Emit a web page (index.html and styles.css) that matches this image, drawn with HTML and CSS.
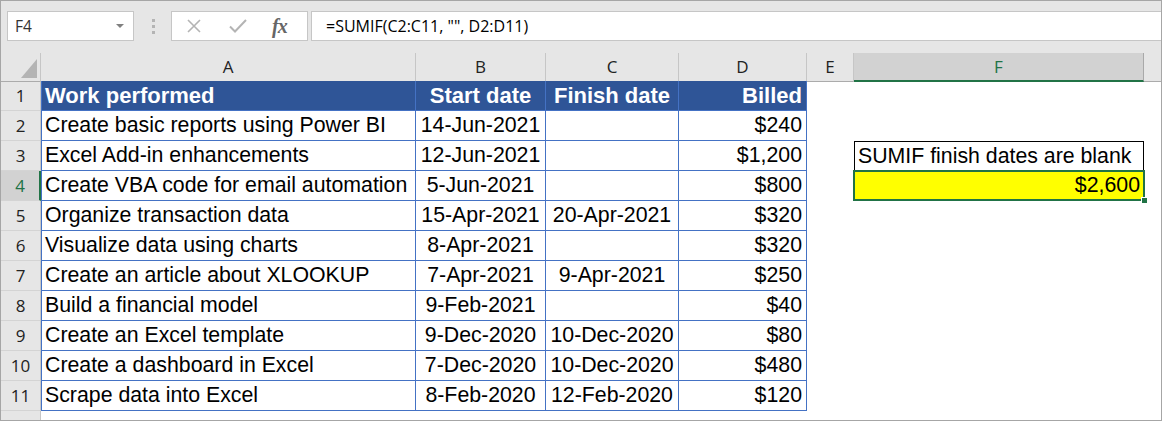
FILE: index.html
```html
<!DOCTYPE html>
<html>
<head>
  <meta charset="utf-8">
  <title>SUMIF blank dates</title>
  <link rel="stylesheet" href="styles.css">
</head>
<body>
  <div class="window">

    <div class="formula-bar">
      <div class="name-box">
        <span class="name-text">F4</span>
        <span class="caret"></span>
      </div>
      <div class="grip"></div>
      <div class="fx-buttons">
        <svg class="btn-icon" width="16" height="16" viewBox="0 0 16 16">
          <path d="M2 2 L14 14 M14 2 L2 14" stroke="#b4b4b4" stroke-width="1.6" fill="none"/>
        </svg>
        <svg class="btn-icon" width="18" height="16" viewBox="0 0 18 16">
          <path d="M1 8.5 L6 13.5 L17 2" stroke="#b4b4b4" stroke-width="2" fill="none"/>
        </svg>
        <span class="fx">fx</span>
      </div>
      <div class="formula-input">=SUMIF(C2:C11, "", D2:D11)</div>
    </div>

    <div class="sheet">
      <div class="row col-heads">
        <div class="corner"><span class="corner-tri"></span></div>
        <div class="col-head">A</div>
        <div class="col-head">B</div>
        <div class="col-head">C</div>
        <div class="col-head">D</div>
        <div class="col-head">E</div>
        <div class="col-head active">F</div>
        <div class="col-rest"></div>
      </div>

      <div class="row">
        <div class="row-head">1</div>
        <div class="cell th first">Work performed</div>
        <div class="cell th center">Start date</div>
        <div class="cell th center">Finish date</div>
        <div class="cell th right">Billed</div>
        <div></div><div></div><div></div>
      </div>

      <div class="row">
        <div class="row-head">2</div>
        <div class="cell first">Create basic reports using Power BI</div>
        <div class="cell center">14-Jun-2021</div>
        <div class="cell center"></div>
        <div class="cell right">$240</div>
        <div></div><div></div><div></div>
      </div>

      <div class="row">
        <div class="row-head">3</div>
        <div class="cell first">Excel Add-in enhancements</div>
        <div class="cell center">12-Jun-2021</div>
        <div class="cell center"></div>
        <div class="cell right">$1,200</div>
        <div></div>
        <div class="label-cell">SUMIF finish dates are blank</div>
        <div></div>
      </div>

      <div class="row">
        <div class="row-head active">4</div>
        <div class="cell first">Create VBA code for email automation</div>
        <div class="cell center">5-Jun-2021</div>
        <div class="cell center"></div>
        <div class="cell right">$800</div>
        <div></div>
        <div class="result-cell">$2,600</div>
        <div></div>
      </div>

      <div class="row">
        <div class="row-head">5</div>
        <div class="cell first">Organize transaction data</div>
        <div class="cell center">15-Apr-2021</div>
        <div class="cell center">20-Apr-2021</div>
        <div class="cell right">$320</div>
        <div></div><div></div><div></div>
      </div>

      <div class="row">
        <div class="row-head">6</div>
        <div class="cell first">Visualize data using charts</div>
        <div class="cell center">8-Apr-2021</div>
        <div class="cell center"></div>
        <div class="cell right">$320</div>
        <div></div><div></div><div></div>
      </div>

      <div class="row">
        <div class="row-head">7</div>
        <div class="cell first">Create an article about XLOOKUP</div>
        <div class="cell center">7-Apr-2021</div>
        <div class="cell center">9-Apr-2021</div>
        <div class="cell right">$250</div>
        <div></div><div></div><div></div>
      </div>

      <div class="row">
        <div class="row-head">8</div>
        <div class="cell first">Build a financial model</div>
        <div class="cell center">9-Feb-2021</div>
        <div class="cell center"></div>
        <div class="cell right">$40</div>
        <div></div><div></div><div></div>
      </div>

      <div class="row">
        <div class="row-head">9</div>
        <div class="cell first">Create an Excel template</div>
        <div class="cell center">9-Dec-2020</div>
        <div class="cell center">10-Dec-2020</div>
        <div class="cell right">$80</div>
        <div></div><div></div><div></div>
      </div>

      <div class="row">
        <div class="row-head">10</div>
        <div class="cell first">Create a dashboard in Excel</div>
        <div class="cell center">7-Dec-2020</div>
        <div class="cell center">10-Dec-2020</div>
        <div class="cell right">$480</div>
        <div></div><div></div><div></div>
      </div>

      <div class="row">
        <div class="row-head">11</div>
        <div class="cell first">Scrape data into Excel</div>
        <div class="cell center">8-Feb-2020</div>
        <div class="cell center">12-Feb-2020</div>
        <div class="cell right">$120</div>
        <div></div><div></div><div></div>
      </div>

      <div class="row tail">
        <div class="row-head"></div>
        <div></div><div></div><div></div><div></div><div></div><div></div><div></div>
      </div>
    </div>

  </div>
</body>
</html>
```

FILE: styles.css
```css
html, body { margin: 0; padding: 0; background: #fff; }

.window {
  width: 1162px;
  height: 421px;
  box-sizing: border-box;
  border: 1px solid #a6a6a6;
  background: #e6e6e6;
  display: flex;
  flex-direction: column;
  overflow: hidden;
}

/* formula bar */
.formula-bar {
  height: 52px;
  box-sizing: border-box;
  padding: 10px 0 0 6px;
  display: flex;
  align-items: flex-start;
  font-family: "Segoe UI", "Open Sans", sans-serif;
}

.name-box, .fx-buttons, .formula-input {
  height: 30px;
  box-sizing: border-box;
  background: #fff;
  border: 1px solid #c6c6c6;
}

.name-box {
  width: 127px;
  display: flex;
  align-items: center;
  justify-content: space-between;
  padding: 0 9px 0 7px;
}
.name-text { font-size: 15.5px; color: #333; }
.caret {
  width: 0;
  height: 0;
  border-left: 4px solid transparent;
  border-right: 4px solid transparent;
  border-top: 4px solid #808080;
}

.grip {
  margin: 8px 0 0 18px;
  width: 3px;
  height: 3px;
  background: #b4b4b4;
  box-shadow: 0 6px 0 #b4b4b4, 0 12px 0 #b4b4b4;
}

.fx-buttons {
  margin-left: 16px;
  width: 137px;
  display: flex;
  align-items: center;
  padding-left: 14px;
  gap: 27px;
}
.btn-icon { display: block; }
.fx {
  font-family: "Liberation Serif", serif;
  font-style: italic;
  font-weight: bold;
  font-size: 20px;
  color: #666;
  letter-spacing: -1px;
  margin-left: -2px;
}

.formula-input {
  margin-left: 3px;
  flex: 1;
  border-right: none;
  padding-left: 14px;
  font-size: 16px;
  line-height: 28px;
  color: #000;
}

/* sheet grid */
.sheet {
  flex: 1;
  display: flex;
  flex-direction: column;
  background: #fff;
}

.row {
  display: grid;
  grid-template-columns: 40px 375px 130px 133px 128px 47px 290px 1fr;
  height: 30px;
}
.row.col-heads { height: 28px; background: #e6e6e6; }
.row.tail { flex: 1; height: auto; }

.corner, .col-head, .col-rest {
  box-sizing: border-box;
  border-bottom: 1px solid #ababab;
  font-family: "Segoe UI", "Open Sans", sans-serif;
  font-size: 17px;
  color: #222;
  text-align: center;
  line-height: 27px;
}
.corner, .col-head { border-right: 1px solid #c6c6c6; }
.corner { position: relative; }
.corner-tri {
  position: absolute;
  right: 3px;
  bottom: 3px;
  width: 16px;
  height: 19px;
  background: #b4b4b4;
  clip-path: polygon(100% 0, 100% 100%, 0 100%);
}
.col-head.active {
  background: #d2d2d2;
  color: #217346;
  border-bottom: 2px solid #217346;
  border-right-color: #a9a9a9;
}

.row-head {
  box-sizing: border-box;
  background: #e6e6e6;
  border-right: 1px solid #c6c6c6;
  border-bottom: 1px solid #d4d4d4;
  font-family: "Segoe UI", "Open Sans", sans-serif;
  font-size: 17px;
  color: #222;
  text-align: center;
  line-height: 29px;
}
.row-head.active {
  background: #d2d2d2;
  color: #217346;
  border-right: 2px solid #217346;
}
.tail .row-head { border-bottom: none; }

.cell {
  box-sizing: border-box;
  border-right: 1px solid #4472c4;
  border-bottom: 1px solid #4472c4;
  padding: 0 4px 0 3px;
  font-family: "Liberation Sans", Arial, sans-serif;
  font-size: 21.3px;
  line-height: 29px;
  color: #000;
  white-space: nowrap;
  overflow: hidden;
}
.cell.first { border-left: 1px solid #4472c4; }
.cell.center { text-align: center; padding: 0; }
.cell.right { text-align: right; }
.cell.th {
  background: #2f5597;
  color: #fff;
  font-weight: bold;
  font-size: 22px;
}

.label-cell, .result-cell {
  box-sizing: border-box;
  font-family: "Liberation Sans", Arial, sans-serif;
  font-size: 21.3px;
  line-height: 29px;
  color: #000;
  white-space: nowrap;
}
.label-cell {
  border: 1px solid #000;
  border-bottom: none;
  padding-left: 3px;
}
.result-cell {
  position: relative;
  background: #ffff00;
  text-align: right;
  padding-right: 4px;
}
/* selection frame and fill handle */
.result-cell::after {
  content: '';
  position: absolute;
  top: -1px;
  left: -1px;
  right: -1px;
  bottom: 0;
  border: 2px solid #217346;
}
.result-cell::before {
  content: '';
  position: absolute;
  right: -4px;
  bottom: -3px;
  width: 5px;
  height: 5px;
  background: #217346;
  border: 1px solid #fff;
  z-index: 1;
}
```
